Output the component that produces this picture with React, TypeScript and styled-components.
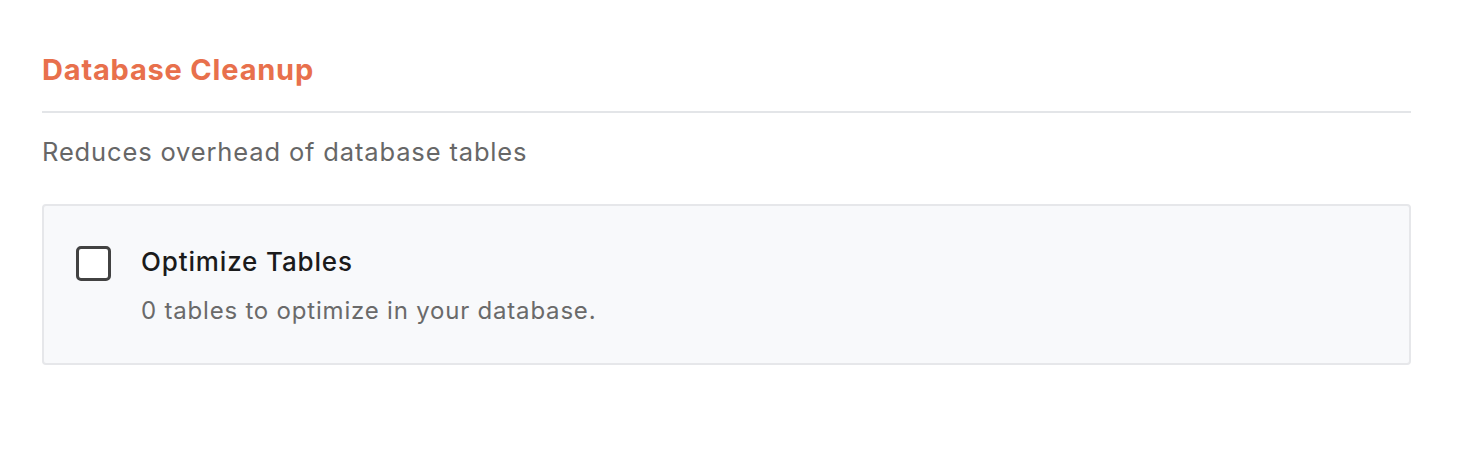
import React, { useState } from "react"
import styled, { createGlobalStyle } from "styled-components"

const GlobalStyle = createGlobalStyle`
  html, body {
    margin: 0;
    padding: 0;
    background: #fff;
  }
  body {
    font-family: Inter, "Noto Sans", "Liberation Sans", sans-serif;
    -webkit-font-smoothing: antialiased;
  }
`

const Section = styled.section`
  padding: 52px 47px 0 42px;
`

const Title = styled.h2`
  margin: 0;
  font-size: 29px;
  line-height: 36px;
  font-weight: 700;
  color: #e8704c;
  letter-spacing: 0.8px;
`

const Divider = styled.hr`
  margin: 23px 0 0;
  border: 0;
  height: 2px;
  background: #e3e5e8;
`

const Description = styled.p`
  margin: 23px 0 0;
  font-size: 25.5px;
  line-height: 32px;
  color: #676767;
  letter-spacing: 0.85px;
`

const Card = styled.div`
  margin-top: 36px;
  display: flex;
  align-items: flex-start;
  gap: 30px;
  padding: 40px 32px 37px;
  background: #f8f9fb;
  border: 2px solid #e6e7ea;
  border-radius: 4px;
`

const Box = styled.button<{ $checked: boolean }>`
  flex: none;
  width: 35px;
  height: 35px;
  padding: 0;
  border: 3px solid #424242;
  border-radius: 5px;
  background: ${(p) => (p.$checked ? "#424242" : "#fff")};
  color: #fff;
  cursor: pointer;
  display: grid;
  place-items: center;
`

const Text = styled.div`
  display: flex;
  flex-direction: column;
  gap: 18px;
`

const Label = styled.span`
  font-size: 26px;
  line-height: 32px;
  font-weight: 500;
  color: #1b1b1b;
  letter-spacing: 0.85px;
`

const Hint = styled.span`
  font-size: 24px;
  line-height: 30px;
  color: #6a6a6a;
  letter-spacing: 0.8px;
`

const App: React.FC = () => {
  const [checked, setChecked] = useState(false)

  return (
    <>
      <GlobalStyle />
      <Section>
        <Title>Database Cleanup</Title>
        <Divider />
        <Description>Reduces overhead of database tables</Description>
        <Card>
          <Box
            $checked={checked}
            aria-label="Optimize Tables"
            onClick={() => setChecked(!checked)}
          >
            {checked && (
              <svg width="20" height="20" viewBox="0 0 20 20">
                <path d="M4 10l4 4 8-9" fill="none" stroke="currentColor" strokeWidth="3" />
              </svg>
            )}
          </Box>
          <Text>
            <Label>Optimize Tables</Label>
            <Hint>0 tables to optimize in your database.</Hint>
          </Text>
        </Card>
      </Section>
    </>
  )
}

export default App
